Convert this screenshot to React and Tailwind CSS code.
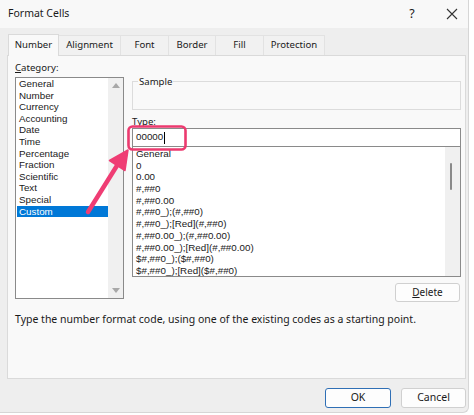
import React from "react";

const categories = ["General","Number","Currency","Accounting","Date","Time","Percentage","Fraction","Scientific","Text","Special","Custom"];
const formats = ["General","0","0.00","#,##0","#,##0.00","#,##0_);(#,##0)","#,##0_);[Red](#,##0)","#,##0.00_);(#,##0.00)","#,##0.00_);[Red](#,##0.00)","$#,##0_);($#,##0)","$#,##0_);[Red]($#,##0)"];
const tabs = [["Number",51],["Alignment",62],["Font",48],["Border",47],["Fill",48],["Protection",61]];
const listFont = { fontFamily: '"Liberation Sans", Arial, sans-serif' };

export default function App() {
  return (
    <div className="relative w-[474px] h-[415px] bg-white overflow-hidden text-[#1a1a1a]" style={{fontFamily:'"Noto Sans", "Open Sans", sans-serif'}}>
      <div className="w-[469px] h-[413px] bg-[#eeeeee] border-r border-b border-[#d6d6d6] rounded-br-[6px] flex flex-col">
        {/* title bar */}
        <div className="h-[28px] bg-[#f8f8f8] flex items-center pl-[8px] pr-[10px]">
          <span className="text-[10.5px] flex-1">Format Cells</span>
          <span className="text-[12.5px] w-[14px] text-center mr-[27px]">?</span>
          <svg width="12" height="12" viewBox="0 0 12 12" className="mr-[0px]"><path d="M1 1L11 11M11 1L1 11" stroke="#333" strokeWidth="1.1"/></svg>
        </div>
        {/* tabs */}
        <div className="flex items-end pl-[8px] h-[27px]">
          {tabs.map(([t,w],i)=> i===0 ? (
            <div key={t} style={{width:w}} className="h-[22px] bg-[#f9f9f9] border border-b-0 border-[#dadada] flex items-center justify-center text-[9.6px] relative z-10 -mb-px">{t}</div>
          ) : (
            <div key={t} style={{width:w}} className="h-[20px] bg-[#f1f1f1] border-t border-r border-[#e2e2e2] flex items-center justify-center text-[9.6px]">{t}</div>
          ))}
        </div>
        {/* panel */}
        <div className="ml-[7px] w-[459px] h-[324px] bg-[#f9f9f9] border border-[#dadada] flex flex-col">
          <div className="flex pl-[7px]">
            {/* left column */}
            <div className="flex flex-col w-[109px]">
              <div className="mt-[6px] text-[9.6px] leading-[12px]"><span className="underline">C</span>ategory:</div>
              <div className="mt-[3px] h-[222px] bg-white border border-[#8a8a8a] flex">
                <div className="flex-1 pt-0 pl-[1px]" style={listFont}>
                  {categories.map(c => (
                    <div key={c} className={"h-[11.6px] leading-[11.6px] text-[9.8px] pl-[2px] " + (c==="Custom" ? "bg-[#0078d7] text-white" : "")}>{c}</div>
                  ))}
                </div>
                <div className="w-[15px] bg-[#f0f0f0] flex flex-col items-center justify-between py-[5px]">
                  <svg width="8" height="5" viewBox="0 0 8 5"><path d="M0 5L4 0L8 5Z" fill="#a8a8a8"/></svg>
                  <svg width="8" height="5" viewBox="0 0 8 5"><path d="M0 0L4 5L8 0Z" fill="#a8a8a8"/></svg>
                </div>
              </div>
            </div>
            {/* right column */}
            <div className="ml-[8px] w-[329px] flex flex-col">
              <fieldset className="mt-[20px] h-[34px] border border-[#dcdcdc] m-0 p-0">
                <legend className="text-[9.6px] px-[1px] ml-[5px] leading-[11px]">Sample</legend>
              </fieldset>
              <div className="mt-[6px] text-[9.6px] leading-[12px]"><span className="underline">T</span>ype:</div>
              <div className="mt-0 h-[19px] bg-white border border-[#8a8a8a] flex items-center pl-[3px] text-[9.8px]" style={listFont}>
                00000<span className="inline-block w-px h-[12px] bg-black ml-[0.5px]"></span>
              </div>
              <div className="h-[130px] bg-white border border-t-0 border-[#8a8a8a] flex">
                <div className="flex-1 pl-[3px] pt-[1px]" style={listFont}>
                  {formats.map((f,i) => (
                    <div key={i} className="h-[11.7px] leading-[11.7px] text-[9.8px] whitespace-nowrap">{f}</div>
                  ))}
                </div>
                <div className="w-[15px] bg-[#f0f0f0] relative">
                  <div className="absolute left-[5px] top-[16px] w-[2px] h-[27px] bg-[#8a8a8a] rounded"></div>
                </div>
              </div>
              <div className="flex justify-end mt-[6px]">
                <button className="w-[65px] h-[19px] bg-[#fdfdfd] border border-[#d0d0d0] rounded-[3px] text-[10px] mr-[1px]"><span className="underline">D</span>elete</button>
              </div>
            </div>
          </div>
          <div className="mt-[11px] pl-[7px] text-[10.5px] leading-[13px] whitespace-nowrap">Type the number format code, using one of the existing codes as a starting point.</div>
        </div>
        {/* footer */}
        <div className="flex justify-end gap-[10px] pt-[9px] pr-[2px]">
          <button className="w-[66px] h-[20px] bg-[#fdfdfd] border border-[#2f6fb5] rounded-[3px] text-[10.5px]">OK</button>
          <button className="w-[65px] h-[20px] bg-[#fdfdfd] border border-[#d0d0d0] rounded-[3px] text-[10.5px]">Cancel</button>
        </div>
      </div>
      {/* annotation overlay */}
      <svg className="absolute left-0 top-0 pointer-events-none" width="474" height="415" viewBox="0 0 474 415">
        <rect x="128.5" y="126.5" width="57" height="23" rx="4" fill="none" stroke="#ec3a6f" strokeWidth="2.6"/>
        <line x1="88" y1="212" x2="118" y2="164" stroke="#ef3d74" strokeWidth="4.5" strokeLinecap="round"/>
        <path d="M128 150 L125 170.5 L109.5 160.5 Z" fill="#ef3d74" stroke="#ef3d74" strokeWidth="1.5" strokeLinejoin="round"/>
      </svg>
    </div>
  );
}
